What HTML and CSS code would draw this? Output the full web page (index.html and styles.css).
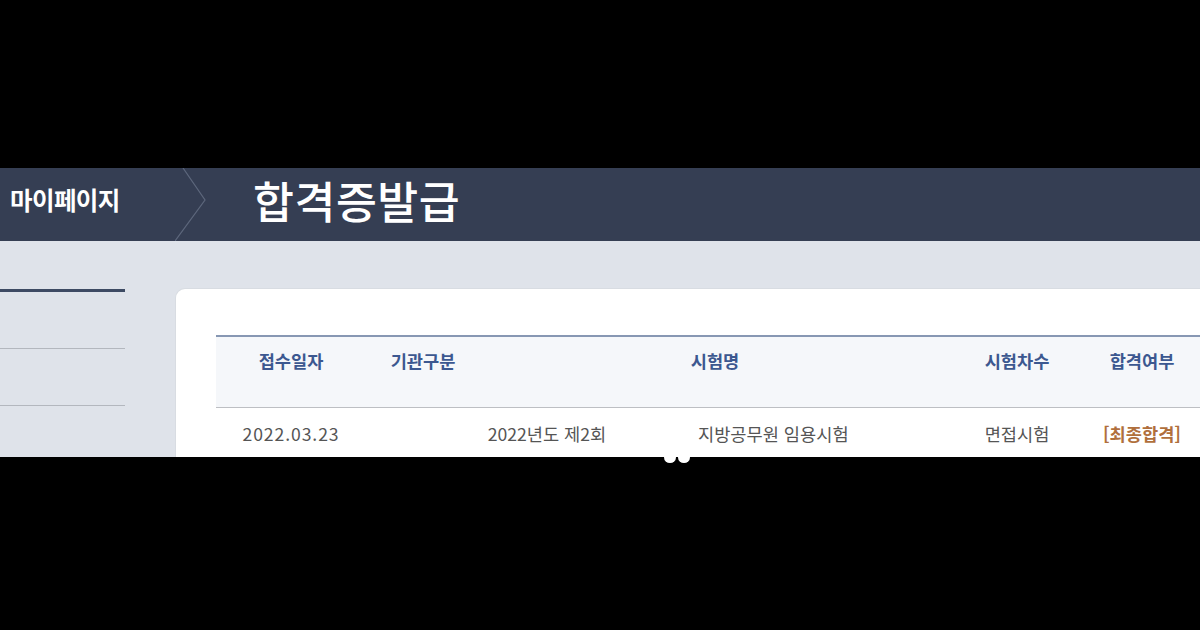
FILE: index.html
```html
<!DOCTYPE html>
<html lang="ko">
<head>
<meta charset="utf-8">
<title>합격증발급</title>
<link rel="stylesheet" href="styles.css">
</head>
<body>
<div class="shot">
  <header class="topbar">
    <div class="crumb">마이페이지</div>
    <svg class="chev" width="40" height="73" viewBox="0 0 40 73"><polyline points="8,0 30,32 0,73" fill="none" stroke="#5d677c" stroke-width="1.2"/></svg>
    <h1 class="title">합격증발급</h1>
  </header>
  <div class="body">
    <aside class="side">
      <div class="side-top"></div>
      <div class="side-item"></div>
      <div class="side-item"></div>
    </aside>
    <section class="card">
      <div class="table">
        <div class="row head">
          <div class="c c1">접수일자</div>
          <div class="c c2">기관구분</div>
          <div class="c c3">시험명</div>
          <div class="c c4">시험차수</div>
          <div class="c c5">합격여부</div>
        </div>
        <div class="row data">
          <div class="c c1 num">2022.03.23</div>
          <div class="c c2"></div>
          <div class="c c3 split"><span class="s1">2022년도 제2회</span><span class="s2">지방공무원 임용시험</span></div>
          <div class="c c4">면접시험</div>
          <div class="c c5 pass">[최종합격]</div>
        </div>
      </div>
    </section>
  </div>
</div>
<div class="cursor"><span class="dot"></span><span class="dot"></span></div>
</body>
</html>
```

FILE: styles.css
```css
html, body {
  margin: 0;
  padding: 0;
  background: #000;
  width: 1200px;
  height: 630px;
  overflow: hidden;
  font-family: "Noto Sans CJK KR", "Noto Sans", sans-serif;
}
.shot {
  margin-top: 168px;
  height: 289px;
  overflow: hidden;
  background: #dfe3ea;
}
.topbar {
  height: 73px;
  box-sizing: border-box;
  padding-bottom: 10px;
  background: #353e53;
  display: flex;
  align-items: center;
}
.crumb {
  color: #fff;
  font-size: 24.5px;
  font-weight: 700;
  width: 175px;
  padding-left: 10px;
  box-sizing: border-box;
  letter-spacing: -0.6px;
  line-height: 1.2;
}
.chev {
  flex: none;
  display: block;
  align-self: flex-start;
}
.title {
  margin: 0 0 0 38px;
  color: #fff;
  font-size: 44.5px;
  font-weight: 500;
  letter-spacing: 0.5px;
  line-height: 1.2;
  white-space: nowrap;
}
.body {
  display: flex;
  padding-top: 48px;
}
.side {
  width: 125px;
  flex: none;
}
.side-top {
  height: 3px;
  background: #3d4a63;
}
.side-item {
  height: 56px;
  border-bottom: 1px solid #b3b7be;
}
.card {
  margin-left: 51px;
  flex: 1;
  height: 300px;
  background: #fff;
  border-radius: 9px 0 0 0;
  box-shadow: 0 0 0 1px #d8dce2;
  padding: 46px 0 0 40px;
}
.table {
  width: 1000px;
  border-top: 2px solid #8797b3;
}
.row {
  display: flex;
}
.head {
  height: 70px;
  background: #f5f7fa;
  border-bottom: 1px solid #bdbfc3;
  color: #3c5890;
  font-weight: 700;
  font-size: 17.6px;
  line-height: 1.3;
}
.head .c {
  padding-top: 13px;
}
.data {
  height: 50px;
  color: #555;
  font-size: 17.6px;
  line-height: 1.3;
}
.data .c {
  padding-top: 15px;
}
.num {
  letter-spacing: 0.9px;
}
.c {
  box-sizing: border-box;
  text-align: center;
  flex: none;
}
.c1 { width: 150px; }
.c2 { width: 114px; }
.c3 { width: 470px; }
.c4 { width: 134px; }
.c5 { width: 116px; }
.split {
  display: flex;
  text-align: left;
}
.s1 {
  width: 134px;
  text-align: center;
}
.s2 {
  margin-left: 84px;
}
.pass {
  color: #b06f3c;
  font-weight: 700;
}
.cursor {
  position: absolute;
  left: 664px;
  top: 452px;
  display: flex;
  gap: 2px;
}
.dot {
  width: 12px;
  height: 11px;
  border-radius: 50%;
  background: #fff;
}
```
